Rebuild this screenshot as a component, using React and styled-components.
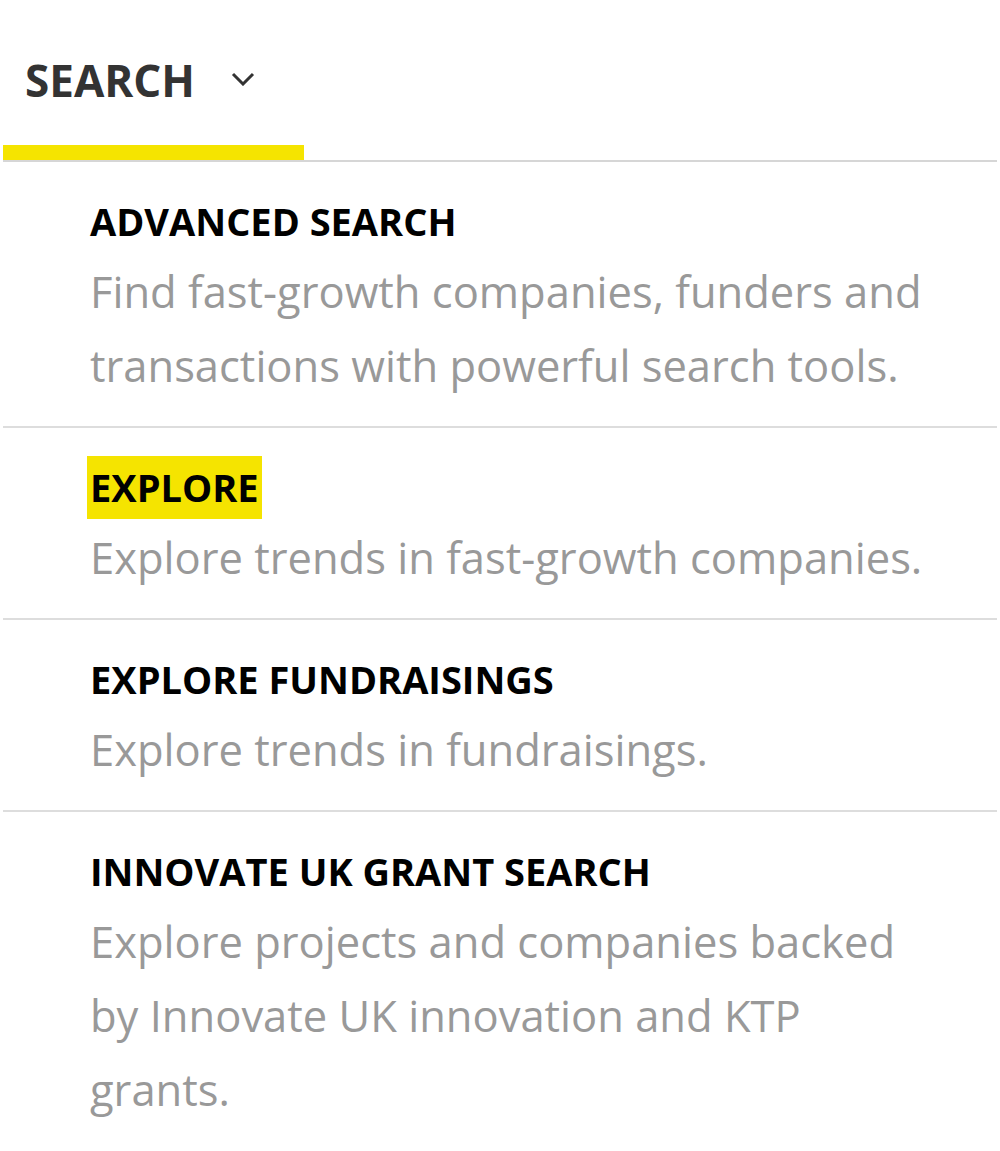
import React, { useState } from "react";
import styled, { createGlobalStyle } from "styled-components";

const GlobalStyle = createGlobalStyle`
  body {
    margin: 0;
    background: #ffffff;
    font-family: "Open Sans", "Noto Sans", sans-serif;
  }
`;

const Menu = styled.nav`
  width: 994px;
  margin-left: 3px;
`;

const Header = styled.div`
  display: flex;
  height: 160px;
  border-bottom: 2px solid #d6d6d6;
`;

const Tab = styled.button`
  display: flex;
  align-items: center;
  gap: 36px;
  width: 301px;
  height: 160px;
  padding: 15px 0 0 22px;
  border: none;
  border-bottom: 15px solid ${({ active }) => (active ? "#f5e400" : "transparent")};
  background: none;
  box-sizing: border-box;
  font-family: inherit;
  font-size: 44px;
  font-weight: 700;
  color: #333333;
  cursor: pointer;
`;

const Chevron = styled.svg`
  width: 24px;
  height: 14px;
  margin-top: -2px;
`;

const List = styled.ul`
  list-style: none;
  margin: 0;
  padding: 0;
`;

const Item = styled.li`
  padding: 28px 60px 23px 87px;
  border-bottom: ${({ last }) => (last ? "none" : "2px solid #dddddd")};
`;

const Title = styled.a`
  display: inline-block;
  margin-left: -3px;
  padding: 0 3px;
  line-height: 63px;
  font-size: 38px;
  font-weight: 700;
  color: #000000;
  text-decoration: none;
  background: ${({ highlight }) => (highlight ? "#f5e400" : "transparent")};
`;

const Desc = styled.p`
  margin: 2px 0 0;
  max-width: 840px;
  font-size: 43.5px;
  line-height: 74px;
  color: #999999;
`;

const items = [
  {
    title: "ADVANCED SEARCH",
    desc: "Find fast-growth companies, funders and transactions with powerful search tools.",
  },
  {
    title: "EXPLORE",
    desc: "Explore trends in fast-growth companies.",
  },
  {
    title: "EXPLORE FUNDRAISINGS",
    desc: "Explore trends in fundraisings.",
  },
  {
    title: "INNOVATE UK GRANT SEARCH",
    desc: "Explore projects and companies backed by Innovate UK innovation and KTP grants.",
  },
];

const App = () => {
  const [hovered, setHovered] = useState(1);

  return (
    <>
      <GlobalStyle />
      <Menu>
        <Header>
          <Tab active>
            SEARCH
            <Chevron viewBox="0 0 24 14" fill="none">
              <path d="M2 2 L12 12 L22 2" stroke="#333333" strokeWidth="3" />
            </Chevron>
          </Tab>
        </Header>
        <List>
          {items.map((item, index) => (
            <Item key={item.title} last={index === items.length - 1} onMouseEnter={() => setHovered(index)}>
              <Title href="#" highlight={hovered === index}>
                {item.title}
              </Title>
              <Desc>{item.desc}</Desc>
            </Item>
          ))}
        </List>
      </Menu>
    </>
  );
};

export default App;
